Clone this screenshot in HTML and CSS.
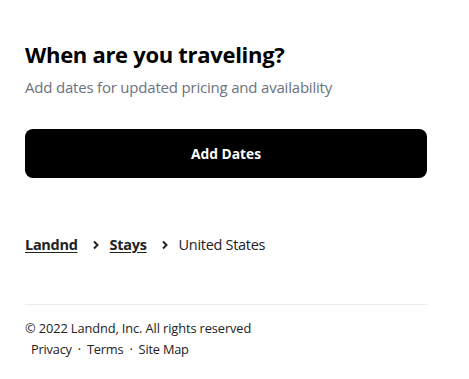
FILE: index.html
```html
<!DOCTYPE html>
<html>
<head>
<meta charset="utf-8">
<link rel="stylesheet" href="styles.css">
</head>
<body>
<main class="page">
  <section class="dates">
    <h2 class="title">When are you traveling?</h2>
    <p class="subtitle">Add dates for updated pricing and availability</p>
    <button class="cta">Add Dates</button>
  </section>
  <nav class="crumbs">
    <a class="crumb" href="#">Landnd</a>
    <svg class="chev" viewBox="0 0 8 10" width="8" height="10"><path d="M2 1.5 L5.5 5 L2 8.5" fill="none" stroke="#222" stroke-width="2"/></svg>
    <a class="crumb" href="#">Stays</a>
    <svg class="chev" viewBox="0 0 8 10" width="8" height="10"><path d="M2 1.5 L5.5 5 L2 8.5" fill="none" stroke="#222" stroke-width="2"/></svg>
    <span class="current">United States</span>
  </nav>
  <footer class="footer">
    <div class="copy">© 2022 Landnd, Inc. All rights reserved</div>
    <div class="links">
      <a href="#">Privacy</a><span class="dot">·</span><a href="#">Terms</a><span class="dot">·</span><a href="#">Site Map</a>
    </div>
  </footer>
</main>
</body>
</html>
```

FILE: styles.css
```css
html, body { margin: 0; padding: 0; background: #fff; }
body { font-family: "Open Sans", "Noto Sans", sans-serif; color: #222; }
.page { width: 402px; padding: 40px 0 0 25px; }
.title { margin: 0; font-size: 22px; font-weight: 700; line-height: 28px; color: #000; letter-spacing: -0.3px; }
.subtitle { margin: 9px 0 0; font-size: 15px; line-height: 20px; color: #6b7280; letter-spacing: -0.2px; }
.cta { display: block; width: 100%; height: 49px; margin-top: 32px; border: 0; border-radius: 8px; background: #000; color: #fff; font-family: inherit; font-size: 13.8px; font-weight: 700; cursor: pointer; }
.crumbs { display: flex; align-items: center; margin-top: 57px; font-size: 14.5px; line-height: 20px; }
.crumb { color: #222; font-weight: 700; text-decoration: underline; text-underline-offset: 2px; letter-spacing: -0.3px; }
.chev { margin: 0 10px 0 14px; }
.current { color: #222; letter-spacing: -0.3px; }
.footer { margin-top: 49px; border-top: 1px solid #ebebeb; padding-top: 13px; font-size: 12.8px; line-height: 20px; color: #222; }
.copy { letter-spacing: -0.1px; }
.links { margin-top: 1px; padding-left: 6px; letter-spacing: -0.2px; }
.links a { color: #222; text-decoration: none; }
.dot { margin: 0 6px; }
```
